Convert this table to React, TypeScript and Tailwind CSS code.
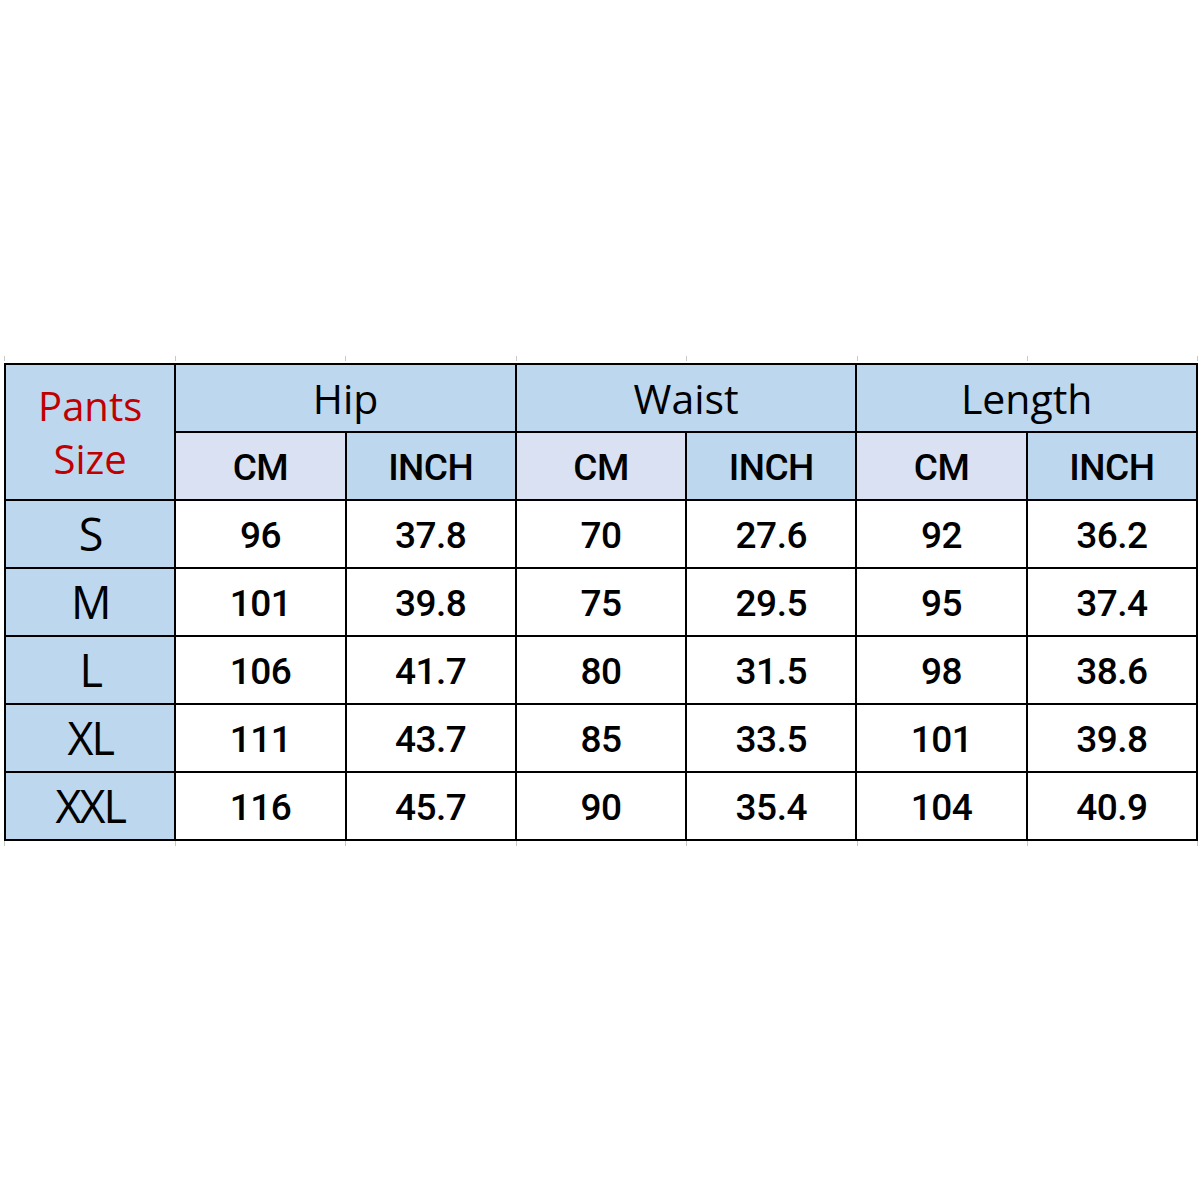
const sizes = [
  { size: "S", values: ["96", "37.8", "70", "27.6", "92", "36.2"] },
  { size: "M", values: ["101", "39.8", "75", "29.5", "95", "37.4"] },
  { size: "L", values: ["106", "41.7", "80", "31.5", "98", "38.6"] },
  { size: "XL", values: ["111", "43.7", "85", "33.5", "101", "39.8"] },
  { size: "XXL", values: ["116", "45.7", "90", "35.4", "104", "40.9"] },
];

const groups = ["Hip", "Waist", "Length"];

function Ticks() {
  return (
    <div className="grid h-[5px] w-[1194px] grid-cols-7">
      {Array.from({ length: 7 }).map((_, i) => (
        <div
          key={i}
          className={i === 6 ? "border-x border-[#c8c8c8]" : "border-l border-[#c8c8c8]"}
        />
      ))}
    </div>
  );
}

export default function App() {
  return (
    <div className="min-h-[1200px] w-[1200px] bg-white pl-[4px] pt-[356px]">
      <Ticks />
      <div className="mt-[2px] grid w-[1194px] grid-cols-7 grid-rows-[repeat(7,66px)] gap-[2px] bg-black p-[2px]">
        <div className="row-span-2 flex flex-col items-center justify-center bg-[#bdd7ee] font-['Open_Sans','Noto_Sans',sans-serif] text-[40px] leading-[53px] text-[#c00000]">
          <span>Pants</span>
          <span>Size</span>
        </div>
        {groups.map((g) => (
          <div
            key={g}
            className="col-span-2 flex items-center justify-center bg-[#bdd7ee] pt-[2px] font-['Open_Sans','Noto_Sans',sans-serif] text-[41px] text-black"
          >
            {g}
          </div>
        ))}
        {groups.flatMap((g) => [
          <div
            key={g + "cm"}
            className="flex items-center justify-center bg-[#d9e1f2] pt-[4px] font-['Roboto','Liberation_Sans',sans-serif] text-[37px] font-medium tracking-[-0.5px] text-black"
          >
            CM
          </div>,
          <div
            key={g + "in"}
            className="flex items-center justify-center bg-[#bdd7ee] pt-[4px] font-['Roboto','Liberation_Sans',sans-serif] text-[37px] font-medium tracking-[-0.5px] text-black"
          >
            INCH
          </div>,
        ])}
        {sizes.flatMap((row) => [
          <div
            key={row.size}
            className="flex items-center justify-center bg-[#bdd7ee] font-['Open_Sans','Noto_Sans',sans-serif] text-[45px] tracking-[-2px] text-black"
          >
            {row.size}
          </div>,
          ...row.values.map((v, i) => (
            <div
              key={row.size + i}
              className="flex items-center justify-center bg-white pt-[3px] font-['Roboto','Liberation_Sans',sans-serif] text-[37px] font-medium tracking-[-0.5px] text-black"
            >
              {v}
            </div>
          )),
        ])}
      </div>
      <Ticks />
    </div>
  );
}
